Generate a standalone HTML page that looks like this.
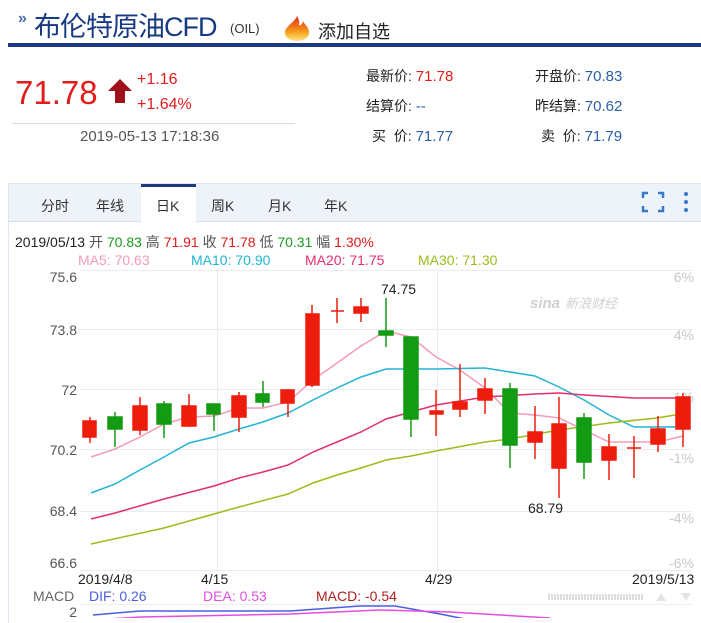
<!DOCTYPE html>
<html><head><meta charset="utf-8">
<style>
*{margin:0;padding:0;box-sizing:border-box}
body{width:701px;height:618px;overflow:hidden;background:#fff;font-family:"Liberation Sans","Noto Sans CJK SC",sans-serif;position:relative}
.a{position:absolute;white-space:nowrap}
.b{color:#2a5fa8}
.r{color:#e21b1b}
.g{color:#1e9a1e}
</style></head><body>
<div class="a" style="left:18px;top:10px;color:#4a6fb0;font-size:16px;font-weight:bold">»</div>
<div class="a" style="left:34px;top:5px;color:#183a82;font-size:27px;letter-spacing:-1px">布伦特原油CFD</div>
<div class="a" style="left:230px;top:21px;color:#333;font-size:13px">(OIL)</div>
<svg class="a" style="left:282px;top:14px" width="30" height="28" viewBox="0 0 30 28"><defs><linearGradient id="f" x1="0" y1="0" x2="0" y2="1"><stop offset="0" stop-color="#e8271a"/><stop offset="0.65" stop-color="#f6a21b"/><stop offset="1" stop-color="#fde68a"/></linearGradient></defs><path d="M15 2 C13 8 5 11 3 17 C2 23 8 27 15 27 C22 27 28 23 27 17 C26 12 22 10 21 7 C20 11 18 12 17 11 C18 7 16 4 15 2Z" fill="url(#f)"/></svg>
<div class="a" style="left:318px;top:18px;color:#222;font-size:18px">添加自选</div>
<div class="a" style="left:8px;top:43px;width:693px;height:4px;background:#1b3a80"></div>

<div class="a r" style="left:15px;top:74px;font-size:33px">71.78</div>
<svg class="a" style="left:106px;top:77px" width="28" height="28" viewBox="0 0 28 28"><path d="M14 2 L26 14 L19 14 L19 26 L9 26 L9 14 L2 14Z" fill="#a0101a"/></svg>
<div class="a r" style="left:137px;top:71px;font-size:16px">+1.16</div>
<div class="a r" style="left:137px;top:96px;font-size:16px">+1.64%</div>
<div class="a" style="left:12px;top:123px;width:283px;height:1px;background:#ddd"></div>
<div class="a" style="left:80px;top:128px;color:#555;font-size:15px">2019-05-13 17:18:36</div>

<div class="a" style="left:366px;top:66px;font-size:14px;color:#222">最新价: <span class="r" style="font-size:15px">71.78</span></div>
<div class="a" style="left:535px;top:66px;font-size:14px;color:#222">开盘价: <span class="b" style="font-size:15px">70.83</span></div>
<div class="a" style="left:366px;top:96px;font-size:14px;color:#222">结算价: <span class="b" style="font-size:15px">--</span></div>
<div class="a" style="left:535px;top:96px;font-size:14px;color:#222">昨结算: <span class="b" style="font-size:15px">70.62</span></div>
<div class="a" style="left:372px;top:126px;font-size:14px;color:#222">买&nbsp;&nbsp;价: <span class="b" style="font-size:15px">71.77</span></div>
<div class="a" style="left:541px;top:126px;font-size:14px;color:#222">卖&nbsp;&nbsp;价: <span class="b" style="font-size:15px">71.79</span></div>

<div class="a" style="left:8px;top:183px;width:693px;height:440px;border-left:1px solid #dde6f0;border-top:1px solid #dde6f0"></div>
<div class="a" style="left:9px;top:184px;width:692px;height:38px;background:#eef3fa;border-bottom:1px solid #d5e0ee"></div>
<div class="a" style="left:141px;top:184px;width:55px;height:39px;background:#fff;border-top:3px solid #1b3a80"></div>
<div class="a" style="left:41px;top:196px;font-size:14px;color:#333">分时</div>
<div class="a" style="left:96px;top:196px;font-size:14px;color:#333">年线</div>
<div class="a" style="left:156px;top:196px;font-size:14px;color:#333">日K</div>
<div class="a" style="left:211px;top:196px;font-size:14px;color:#333">周K</div>
<div class="a" style="left:268px;top:196px;font-size:14px;color:#333">月K</div>
<div class="a" style="left:324px;top:196px;font-size:14px;color:#333">年K</div>
<svg class="a" style="left:641px;top:191px" width="24" height="22" viewBox="0 0 24 22"><path d="M2 7V2H7M17 2H22V7M22 15V20H17M7 20H2V15" fill="none" stroke="#3a78c8" stroke-width="2.5"/></svg>
<svg class="a" style="left:682px;top:190px" width="8" height="24"><circle cx="4" cy="4" r="2" fill="#3a78c8"/><circle cx="4" cy="12" r="2" fill="#3a78c8"/><circle cx="4" cy="20" r="2" fill="#3a78c8"/></svg>

<div class="a" style="left:15px;top:232px;font-size:14px;color:#222">2019/05/13 <span style="color:#555">开</span> <span class="g">70.83</span> <span style="color:#555">高</span> <span class="r">71.91</span> <span style="color:#555">收</span> <span class="r">71.78</span> <span style="color:#555">低</span> <span class="g">70.31</span> <span style="color:#555">幅</span> <span class="r">1.30%</span></div>
<div class="a" style="left:78px;top:252px;font-size:14px;color:#f59bb6">MA5: 70.63</div>
<div class="a" style="left:191px;top:252px;font-size:14px;color:#22b4d4">MA10: 70.90</div>
<div class="a" style="left:305px;top:252px;font-size:14px;color:#e0306a">MA20: 71.75</div>
<div class="a" style="left:418px;top:252px;font-size:14px;color:#9bbc1c">MA30: 71.30</div>

<svg class="a" style="left:0;top:0" width="701" height="618">
<g stroke="#ececec" stroke-width="1">
<line x1="80" y1="270.5" x2="692" y2="270.5"/><line x1="80" y1="329.5" x2="692" y2="329.5"/><line x1="80" y1="389.5" x2="692" y2="389.5"/><line x1="80" y1="449.5" x2="692" y2="449.5"/><line x1="80" y1="511.5" x2="692" y2="511.5"/><line x1="80" y1="570.5" x2="692" y2="570.5"/>
<line x1="217.5" y1="268" x2="217.5" y2="572"/><line x1="437.5" y1="268" x2="437.5" y2="572"/>
</g>
<g font-family="Liberation Sans,sans-serif" font-size="14" fill="#555" text-anchor="end">
<text x="77" y="282">75.6</text><text x="77" y="335">73.8</text><text x="77" y="395">72</text><text x="77" y="455">70.2</text><text x="77" y="516">68.4</text><text x="77" y="568">66.6</text>
</g>
<g font-family="Liberation Sans,sans-serif" font-size="14" fill="#c8c8c8" text-anchor="end">
<text x="694" y="282">6%</text><text x="694" y="340">4%</text><text x="694" y="402">1%</text><text x="694" y="463">-1%</text><text x="694" y="523">-4%</text><text x="694" y="568">-6%</text>
</g>
<text x="530" y="308" font-family="Liberation Sans,sans-serif" font-size="15" font-style="italic" font-weight="bold" fill="#d0d0d0">sina</text>
<text x="565" y="308" font-family="Noto Sans CJK SC,sans-serif" font-size="13" font-style="italic" fill="#d0d0d0">新浪财经</text>
<g fill="none" stroke-width="1.5">
<polyline stroke="#f59bb6" points="91,457 115,449 140,437 164,424 189,417 214,416 239,408 263,408 288,402 313,380 337,363 361,346 386,331 411,337 436,357 460,370 485,388 510,413 535,415 559,418 584,430 609,442 634,442 658,442 683,436"/>
<polyline stroke="#22b4d4" points="91,493 115,484 140,470 164,457 189,443 214,437 239,429 263,422 288,413 313,400 337,388 361,377 386,369 436,369 485,368 535,376 559,387 584,400 609,415 634,427 687,427"/>
<polyline stroke="#e0306a" points="91,519 115,513 164,499 214,486 239,478 263,472 288,465 313,452 337,442 361,432 386,419 436,405 485,397 535,394 559,393 584,395 634,398 687,398"/>
<polyline stroke="#9bbc1c" points="91,544 164,528 214,514 239,507 288,494 313,483 337,475 361,468 386,460 411,456 436,451 485,442 510,439 559,430 609,423 657,418 687,413"/>
</g>
<g stroke-width="1.5">
<g stroke="#ee1c0c" fill="#ee1c0c">
<line x1="90" y1="417" x2="90" y2="443"/><rect x="83" y="421" width="13" height="16"/>
<line x1="140" y1="397" x2="140" y2="435"/><rect x="133" y="406" width="14" height="24"/>
<line x1="189" y1="394" x2="189" y2="427"/><rect x="182" y="406" width="14" height="20"/>
<line x1="239" y1="392" x2="239" y2="432"/><rect x="232" y="396" width="14" height="21"/>
<line x1="288" y1="389" x2="288" y2="417"/><rect x="281" y="390" width="13" height="13"/>
<line x1="312" y1="305" x2="312" y2="387"/><rect x="306" y="314" width="13" height="71"/>
<line x1="337" y1="298" x2="337" y2="323"/><line x1="331" y1="311" x2="344" y2="311"/>
<line x1="361" y1="298" x2="361" y2="322"/><rect x="354" y="307" width="14" height="6"/>
<line x1="436" y1="390" x2="436" y2="436"/><rect x="430" y="411" width="13" height="3"/>
<line x1="460" y1="364" x2="460" y2="417"/><rect x="453" y="402" width="14" height="7"/>
<line x1="485" y1="378" x2="485" y2="414"/><rect x="478" y="389" width="14" height="11"/>
<line x1="535" y1="406" x2="535" y2="459"/><rect x="528" y="432" width="14" height="10"/>
<line x1="559" y1="397" x2="559" y2="498"/><rect x="552" y="424" width="14" height="44"/>
<line x1="609" y1="434" x2="609" y2="480"/><rect x="602" y="447" width="14" height="13"/>
<line x1="634" y1="436" x2="634" y2="478"/><line x1="627" y1="448" x2="641" y2="448"/>
<line x1="658" y1="416" x2="658" y2="452"/><rect x="651" y="429" width="14" height="15"/>
<line x1="683" y1="393" x2="683" y2="447"/><rect x="676" y="397" width="14" height="32"/>
</g>
<g stroke="#139b13" fill="#139b13">
<line x1="115" y1="412" x2="115" y2="447"/><rect x="108" y="417" width="14" height="12"/>
<line x1="164" y1="401" x2="164" y2="438"/><rect x="157" y="404" width="14" height="20"/>
<line x1="214" y1="404" x2="214" y2="431"/><rect x="207" y="404" width="13" height="10"/>
<line x1="263" y1="381" x2="263" y2="407"/><rect x="256" y="394" width="13" height="8"/>
<line x1="386" y1="298" x2="386" y2="347"/><rect x="379" y="331" width="14" height="4"/>
<line x1="411" y1="337" x2="411" y2="437"/><rect x="404" y="337" width="14" height="82"/>
<line x1="510" y1="383" x2="510" y2="468"/><rect x="503" y="389" width="14" height="56"/>
<line x1="584" y1="413" x2="584" y2="479"/><rect x="577" y="418" width="14" height="44"/>
</g>
</g>
<g font-family="Liberation Sans,sans-serif" font-size="14" fill="#222">
<text x="381" y="294">74.75</text><text x="528" y="513">68.79</text>
<text x="78" y="584">2019/4/8</text><text x="201" y="584">4/15</text><text x="425" y="584">4/29</text><text x="632" y="584">2019/5/13</text>
</g>
<g font-family="Liberation Sans,sans-serif" font-size="14">
<text x="33" y="601" fill="#666">MACD</text><text x="89" y="601" fill="#4a5fe0">DIF: 0.26</text><text x="203" y="601" fill="#e050e0">DEA: 0.53</text><text x="316" y="601" fill="#b02020">MACD: -0.54</text>
<text x="77" y="617" fill="#555" text-anchor="end">2</text>
</g>
<line x1="548" y1="597" x2="643" y2="597" stroke="#ddd" stroke-width="6" stroke-dasharray="2,1"/>
<path d="M656 601l5-8 5 8z M681 593l5 8 5-8z" fill="#e4e4e4"/>
<line x1="80" y1="604.5" x2="692" y2="604.5" stroke="#eee"/>
<polyline fill="none" stroke="#4a5fe0" stroke-width="1.5" points="93,615 140,611 290,611 360,606 395,606 440,614 470,620"/>
<polyline fill="none" stroke="#e050e0" stroke-width="1.5" points="93,620 140,617 290,614 380,610 450,612 550,618"/>
</svg>
</body></html>
